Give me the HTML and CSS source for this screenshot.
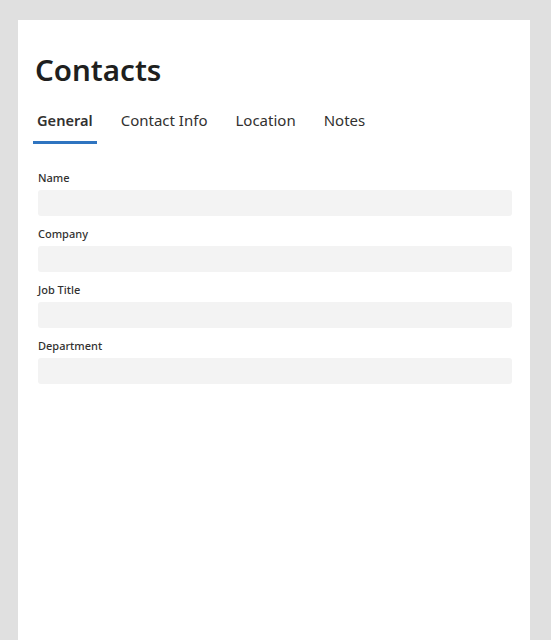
FILE: index.html
```html
<!DOCTYPE html>
<html lang="en">
<head>
<meta charset="utf-8">
<title>Contacts</title>
<link rel="stylesheet" href="styles.css">
</head>
<body>
<main class="card">
  <h1 class="title">Contacts</h1>
  <nav class="tabs">
    <span class="tab active">General</span>
    <span class="tab">Contact Info</span>
    <span class="tab">Location</span>
    <span class="tab">Notes</span>
  </nav>
  <form class="form">
    <div class="field">
      <label class="label">Name</label>
      <div class="input"></div>
    </div>
    <div class="field">
      <label class="label">Company</label>
      <div class="input"></div>
    </div>
    <div class="field">
      <label class="label">Job Title</label>
      <div class="input"></div>
    </div>
    <div class="field">
      <label class="label">Department</label>
      <div class="input"></div>
    </div>
  </form>
</main>
</body>
</html>
```

FILE: styles.css
```css
html, body {
  margin: 0;
  padding: 0;
  background: #e0e0e0;
  height: 100%;
}
body {
  font-family: "Noto Sans", "Open Sans", sans-serif;
  color: #323130;
  padding-top: 20px;
  box-sizing: border-box;
}
.card {
  width: 512px;
  margin-left: 18px;
  min-height: 620px;
  background: #ffffff;
  box-sizing: border-box;
  padding: 30px 18px 0 15px;
}
.title {
  margin: 0 0 0 2px;
  font-size: 29.5px;
  line-height: 40px;
  font-weight: 600;
  color: #201f1e;
}
.tabs {
  display: flex;
  gap: 20px;
  margin-top: 12px;
}
.tab {
  padding: 8px 4px 11px;
  font-size: 15px;
  line-height: 20px;
  color: #323130;
  border-bottom: 3px solid transparent;
}
.tab.active {
  font-size: 14.6px;
  font-weight: 600;
  border-bottom-color: #2f74c0;
}
.form {
  margin-top: 26px;
  padding-left: 5px;
  display: flex;
  flex-direction: column;
  gap: 10px;
}
.field {
  display: flex;
  flex-direction: column;
}
.label {
  font-size: 11px;
  line-height: 16px;
  font-weight: 500;
  color: #323130;
  margin-bottom: 4px;
}
.input {
  height: 26px;
  background: #f3f3f3;
  border-radius: 3px;
}
```
